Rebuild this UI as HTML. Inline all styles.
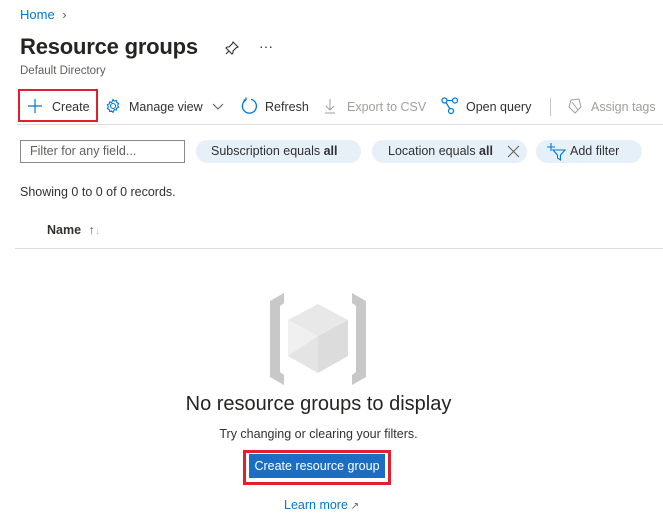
<!DOCTYPE html>
<html><head><style>
body{margin:0;width:663px;height:531px;background:#fff;font-family:"Liberation Sans",sans-serif;color:#323130;position:relative;overflow:hidden}
.a{position:absolute;white-space:nowrap}
.pill{position:absolute;top:140px;height:23px;border-radius:12px;background:#e6f0f9;font-size:12.5px;line-height:23px;color:#323130}
.tb{font-size:12.5px;top:100px}
</style></head><body>
<div class="a" style="left:20px;top:7px;font-size:13px;color:#0078d4">Home <span style="color:#605e5c;margin-left:4px">&#x203A;</span></div>
<div class="a" style="left:20px;top:34px;font-size:22px;font-weight:bold;color:#252423;letter-spacing:-0.2px">Resource groups</div>
<svg class="a" style="left:225px;top:41px" width="14" height="14" viewBox="0 0 14 14" fill="none" stroke="#323130" stroke-width="1.1"><path d="M8 1l5 5-2 1-3 3 0 2-1 1-6-6 1-1 2 0 3-3z M4 10l-3 3"/></svg>
<div class="a" style="left:259px;top:38px;font-size:14px">···</div>
<div class="a" style="left:20px;top:65px;font-size:11.5px;color:#605e5c">Default Directory</div>

<div class="a" style="left:18px;top:89px;width:76px;height:29px;border:2.5px solid #e0202d"></div>
<svg class="a" style="left:28px;top:99px" width="14" height="14"><path d="M7 0v14M0 7h14" stroke="#0078d4" stroke-width="1.2"/></svg>
<div class="a tb" style="left:52px">Create</div>
<svg class="a" style="left:105px;top:98px" width="16" height="16" viewBox="0 0 16 16" fill="none" stroke="#0078d4" stroke-width="1.1"><circle cx="8" cy="8" r="2.5"/><path d="M8 1.5l1.3 1.6 2-.6.4 2 1.9.9-.9 1.9.9 1.9-1.9.9-.4 2-2-.6L8 14.5 6.7 12.9l-2 .6-.4-2-1.9-.9.9-1.9-.9-1.9 1.9-.9.4-2 2 .6z"/></svg>
<div class="a tb" style="left:129px">Manage view</div>
<svg class="a" style="left:212px;top:103px" width="12" height="8"><path d="M1 1l5 5 5-5" stroke="#605e5c" fill="none"/></svg>
<svg class="a" style="left:240px;top:97px" width="18" height="18" viewBox="0 0 18 18" fill="none" stroke="#0078d4" stroke-width="1.3"><path d="M6 3A7 7 0 1 0 11 2.3M6 3V0.5M6 3H3.5"/></svg>
<div class="a tb" style="left:265px">Refresh</div>
<svg class="a" style="left:324px;top:98px" width="12" height="16"><path d="M6 1v11M2 8l4 4 4-4M1 15h10" stroke="#a19f9d" fill="none"/></svg>
<div class="a tb" style="left:347px;color:#a19f9d">Export to CSV</div>
<svg class="a" style="left:441px;top:97px" width="18" height="18" fill="none" stroke="#0078d4" stroke-width="1.2"><circle cx="3.5" cy="3.5" r="2.5"/><circle cx="14" cy="3.5" r="2.5"/><circle cx="10" cy="14" r="2.5"/><path d="M6 3.5h5.5M5 5.5l4 6.5"/></svg>
<div class="a tb" style="left:466px">Open query</div>
<div class="a" style="left:550px;top:98px;width:1px;height:18px;background:#c8c6c4"></div>
<svg class="a" style="left:568px;top:98px" width="14" height="16" fill="none" stroke="#a19f9d"><path d="M3 2l8-1 2 8-6 6-6-6z M4 4l6 8"/></svg>
<div class="a tb" style="left:591px;color:#a19f9d">Assign tags</div>
<div class="a" style="left:17px;top:124px;width:646px;height:1px;background:#e1dfdd"></div>

<div class="a" style="left:20px;top:140px;width:163px;height:21px;border:1px solid #8a8886;font-size:12.5px;line-height:21px;color:#605e5c"><span style="margin-left:9px">Filter for any field...</span></div>
<div class="pill" style="left:196px;width:165px"><span style="margin-left:15px">Subscription equals <b>all</b></span></div>
<div class="pill" style="left:372px;width:155px"><span style="margin-left:16px">Location equals <b>all</b></span></div>
<svg class="a" style="left:507px;top:145px" width="13" height="13"><path d="M1 1l11 11M12 1L1 12" stroke="#605e5c"/></svg>
<div class="pill" style="left:536px;width:106px"><span style="margin-left:34px">Add filter</span></div>
<svg class="a" style="left:547px;top:143px" width="20" height="18" fill="none" stroke="#0078d4" stroke-width="1.1"><path d="M4 0v8M0 4h8M6 7h12l-4.5 5v5l-3-2v-3z"/></svg>

<div class="a" style="left:20px;top:185px;font-size:12.5px">Showing 0 to 0 of 0 records.</div>
<div class="a" style="left:47px;top:223px;font-size:12.5px;font-weight:bold;color:#323130">Name <span style="font-weight:normal;color:#605e5c;margin-left:4px">↑<span style="color:#c8c6c4;font-size:11px">↓</span></span></div>
<div class="a" style="left:15px;top:248px;width:648px;height:1px;background:#e1dfdd"></div>

<svg class="a" style="left:268px;top:292px" width="100" height="94" viewBox="0 0 100 94">
<path d="M2 9L16 1v10L12 14v66l4 3v10L2 85z" fill="#c8c8c8"/>
<path d="M98 9L84 1v10l4 3v66l-4 3v10l14-8z" fill="#c8c8c8"/>
<path d="M50 12l30 16-30 16-30-16z" fill="#e8e8e8"/>
<path d="M20 28l30 16v37L20 64z" fill="#f0f0f0"/>
<path d="M80 28L50 44v37l30-17z" fill="#dcdcdc"/>
<path d="M50 44L20 64l30 17z" fill="#e4e4e4"/>
</svg>
<div class="a" style="left:0;width:637px;text-align:center;top:393px;font-size:20px;color:#252423">No resource groups to display</div>
<div class="a" style="left:0;width:637px;text-align:center;top:427px;font-size:12.5px">Try changing or clearing your filters.</div>
<div class="a" style="left:243px;top:450px;width:142px;height:29px;border:3px solid #e0202d"></div>
<div class="a" style="left:249px;top:454px;width:136px;height:25px;background:#1b6ec2;color:#fff;font-size:12.5px;line-height:24px;text-align:center;border-bottom:1px solid #fff;box-sizing:border-box">Create resource group</div>
<div class="a" style="left:284px;top:498px;font-size:12.5px;color:#0078d4">Learn more<span style="font-size:10px;color:#605e5c"> ↗</span></div>
</body></html>
